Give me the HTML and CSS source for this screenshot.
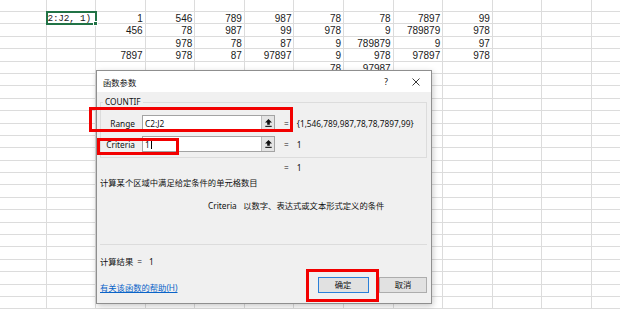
FILE: index.html
```html
<!DOCTYPE html>
<html lang="zh-CN">
<head>
<meta charset="utf-8">
<title>函数参数</title>
<link rel="stylesheet" href="styles.css">
</head>
<body>
<div class="sheet">
  <span></span><span></span><span></span><span></span><span></span><span></span><span></span><span></span><span></span><span></span><span></span><span></span><span></span>
  <span></span><span class="sel"><em class="formula">2:J2, 1)</em></span><span>1</span><span>546</span><span>789</span><span>987</span><span>78</span><span>78</span><span>7897</span><span>99</span><span></span><span></span><span></span>
  <span></span><span></span><span>456</span><span>78</span><span>987</span><span>99</span><span>978</span><span>9</span><span>789879</span><span>978</span><span></span><span></span><span></span>
  <span></span><span></span><span></span><span>978</span><span>78</span><span>87</span><span>9</span><span>789879</span><span>9</span><span>97</span><span></span><span></span><span></span>
  <span></span><span></span><span>7897</span><span>978</span><span>87</span><span>97897</span><span>9</span><span>978</span><span>97897</span><span>978</span><span></span><span></span><span></span>
  <span></span><span></span><span></span><span></span><span></span><span></span><span>78</span><span>97987</span><span></span><span></span><span></span><span></span><span></span>
  <span></span><span></span><span></span><span></span><span></span><span></span><span></span><span></span><span></span><span></span><span></span><span></span><span></span>
  <span></span><span></span><span></span><span></span><span></span><span></span><span></span><span></span><span></span><span></span><span></span><span></span><span></span>
  <span></span><span></span><span></span><span></span><span></span><span></span><span></span><span></span><span></span><span></span><span></span><span></span><span></span>
  <span></span><span></span><span></span><span></span><span></span><span></span><span></span><span></span><span></span><span></span><span></span><span></span><span></span>
  <span></span><span></span><span></span><span></span><span></span><span></span><span></span><span></span><span></span><span></span><span></span><span></span><span></span>
  <span></span><span></span><span></span><span></span><span></span><span></span><span></span><span></span><span></span><span></span><span></span><span></span><span></span>
  <span></span><span></span><span></span><span></span><span></span><span></span><span></span><span></span><span></span><span></span><span></span><span></span><span></span>
  <span></span><span></span><span></span><span></span><span></span><span></span><span></span><span></span><span></span><span></span><span></span><span></span><span></span>
  <span></span><span></span><span></span><span></span><span></span><span></span><span></span><span></span><span></span><span></span><span></span><span></span><span></span>
  <span></span><span></span><span></span><span></span><span></span><span></span><span></span><span></span><span></span><span></span><span></span><span></span><span></span>
  <span></span><span></span><span></span><span></span><span></span><span></span><span></span><span></span><span></span><span></span><span></span><span></span><span></span>
  <span></span><span></span><span></span><span></span><span></span><span></span><span></span><span></span><span></span><span></span><span></span><span></span><span></span>
  <span></span><span></span><span></span><span></span><span></span><span></span><span></span><span></span><span></span><span></span><span></span><span></span><span></span>
  <span></span><span></span><span></span><span></span><span></span><span></span><span></span><span></span><span></span><span></span><span></span><span></span><span></span>
  <span></span><span></span><span></span><span></span><span></span><span></span><span></span><span></span><span></span><span></span><span></span><span></span><span></span>
  <span></span><span></span><span></span><span></span><span></span><span></span><span></span><span></span><span></span><span></span><span></span><span></span><span></span>
  <span></span><span></span><span></span><span></span><span></span><span></span><span></span><span></span><span></span><span></span><span></span><span></span><span></span>
  <span></span><span></span><span></span><span></span><span></span><span></span><span></span><span></span><span></span><span></span><span></span><span></span><span></span>
  <span></span><span></span><span></span><span></span><span></span><span></span><span></span><span></span><span></span><span></span><span></span><span></span><span></span>
  <span></span><span></span><span></span><span></span><span></span><span></span><span></span><span></span><span></span><span></span><span></span><span></span><span></span>
</div>

<div class="dialog">
  <div class="titlebar">
    <span class="title">函数参数</span>
    <span class="tb-btn">?</span>
    <span class="tb-btn"><svg class="x-icon" width="8" height="8" viewBox="0 0 8 8"><path d="M0.5 0.5 L7.5 7.5 M7.5 0.5 L0.5 7.5" stroke="#222" stroke-width="0.9" fill="none"/></svg></span>
  </div>
  <div class="body">
    <fieldset class="group">
      <legend>COUNTIF</legend>
      <div class="arg-row">
        <span class="arg-label">Range</span>
        <div class="ref-input"><span class="ref-text">C2:J2</span><span class="pick"><svg width="7" height="8" viewBox="0 0 7 8"><path d="M3.5 0 L0 3.5 L2.2 3.5 L2.2 5.8 L4.8 5.8 L4.8 3.5 L7 3.5 Z" fill="#111"/><rect x="0.3" y="6.8" width="6.4" height="1.1" fill="#111"/></svg></span></div>
        <span class="eq">=</span>
        <span class="val">{1,546,789,987,78,78,7897,99}</span>
      </div>
      <div class="arg-row">
        <span class="arg-label">Criteria</span>
        <div class="ref-input"><span class="ref-text">1<i class="caret"></i></span><span class="pick"><svg width="7" height="8" viewBox="0 0 7 8"><path d="M3.5 0 L0 3.5 L2.2 3.5 L2.2 5.8 L4.8 5.8 L4.8 3.5 L7 3.5 Z" fill="#111"/><rect x="0.3" y="6.8" width="6.4" height="1.1" fill="#111"/></svg></span></div>
        <span class="eq">=</span>
        <span class="val">1</span>
      </div>
    </fieldset>
    <div class="line eq-line"><span>=</span><span class="val">1</span></div>
    <div class="line desc">计算某个区域中满足给定条件的单元格数目</div>
    <div class="line arg-desc"><span class="arg-name">Criteria</span>以数字、表达式或文本形式定义的条件</div>
    <div class="sep"></div>
    <div class="line result"><span>计算结果</span><span class="res-eq">=</span><span>1</span></div>
    <div class="footer">
      <a class="help-link" href="#">有关该函数的帮助(H)</a>
      <div class="buttons">
        <button class="btn primary">确定</button>
        <button class="btn cancel">取消</button>
      </div>
    </div>
  </div>
</div>

<div class="mark mark-range"></div>
<div class="mark mark-criteria"></div>
<div class="mark mark-ok"></div>
</body>
</html>
```

FILE: styles.css
```css
html, body {
  margin: 0;
  padding: 0;
}
body {
  width: 620px;
  height: 309px;
  overflow: hidden;
  position: relative;
  background: #fff;
  font-family: "Liberation Sans", Arial, sans-serif;
}

/* spreadsheet */
.sheet {
  display: grid;
  grid-template-columns: 46.5px repeat(12, 49.6px);
  grid-template-rows: 12px;
  grid-auto-rows: 12.4px;
}
.sheet > span {
  box-sizing: border-box;
  border-right: 1px solid #dcdcdc;
  border-bottom: 1px solid #dcdcdc;
  font-size: 10px;
  line-height: 12px;
  padding: 1px 2px 0 0;
  text-align: right;
  white-space: nowrap;
  color: #1a1a1a;
  overflow: hidden;
}
.sheet > .sel {
  position: relative;
  z-index: 1;
  outline: 2px solid #217346;
  outline-offset: -1px;
  text-align: left;
  padding: 1px 0 0 0;
  overflow: visible;
}
.sheet > .sel::after {
  content: "";
  position: absolute;
  right: -3px;
  bottom: -3px;
  width: 3px;
  height: 3px;
  background: #217346;
  border: 1px solid #fff;
}
.formula {
  display: block;
  font-style: normal;
  font-family: "Liberation Mono", "DejaVu Sans Mono", monospace;
  font-size: 9.4px;
  letter-spacing: -0.2px;
  padding-left: 1px;
}

/* dialog */
.dialog {
  position: absolute;
  left: 96px;
  top: 70px;
  width: 336px;
  height: 234px;
  box-sizing: border-box;
  border: 1px solid #8f8f8f;
  background: #f0f0f0;
  box-shadow: 1px 2px 6px rgba(0, 0, 0, 0.22);
  display: flex;
  flex-direction: column;
  font-family: "Noto Sans", "Noto Sans CJK SC", sans-serif;
  font-size: 8.3px;
  color: #111;
  z-index: 2;
}
.titlebar {
  height: 21px;
  flex: none;
  background: #fff;
  display: flex;
  align-items: center;
  padding-left: 6px;
}
.title {
  flex: 1;
}
.tb-btn {
  width: 30px;
  text-align: center;
  font-size: 8.5px;
  display: flex;
  justify-content: center;
  align-items: center;
}
.body {
  flex: 1;
  display: flex;
  flex-direction: column;
  padding: 5px 4px 0 3px;
}
.group {
  margin: 0;
  padding: 8px 0 5px 0;
  width: 327px;
  box-sizing: border-box;
  border: 1px solid #dcdcdc;
  min-inline-size: auto;
}
.group legend {
  padding: 0 2px;
  margin-left: 2px;
  line-height: 10px;
  font-size: 8.3px;
}
.arg-row {
  display: flex;
  align-items: center;
  height: 16px;
}
.arg-row + .arg-row {
  margin-top: 5px;
}
.arg-label {
  width: 36px;
  box-sizing: border-box;
  text-align: right;
  padding-right: 2px;
}
.ref-input {
  width: 133px;
  height: 16px;
  margin-left: 5px;
  box-sizing: border-box;
  border: 1px solid #a3a3a3;
  background: #fff;
  display: flex;
  align-items: center;
}
.ref-text {
  flex: 1;
  padding-left: 2px;
  display: flex;
  align-items: center;
}
.caret {
  display: inline-block;
  width: 1px;
  height: 10px;
  background: #000;
  margin-left: 1px;
}
.pick {
  width: 12px;
  height: 14px;
  background: #e4e4e4;
  border-left: 1px solid #bdbdbd;
  display: flex;
  align-items: center;
  justify-content: center;
}
.eq {
  margin-left: 9px;
}
.val {
  margin-left: 8px;
}
.line {
  height: 11px;
  line-height: 11px;
  white-space: nowrap;
}
.eq-line {
  margin-top: 4px;
  padding-left: 184px;
}
.desc {
  margin-top: 4px;
}
.arg-desc {
  margin-top: 11.5px;
  padding-left: 108px;
}
.arg-name {
  margin-right: 6.5px;
}
.sep {
  margin-top: 33.5px;
  width: 327px;
  height: 1px;
  background: #dcdcdc;
}
.result {
  margin-top: 11px;
}
.res-eq {
  margin: 0 7px 0 4px;
}
.footer {
  display: flex;
  align-items: flex-start;
  margin-top: 10px;
}
.help-link {
  margin-top: 5px;
  line-height: 11px;
  color: #0a64c8;
  text-decoration: underline;
}
.buttons {
  margin-left: auto;
  display: flex;
  gap: 10.5px;
}
.btn {
  height: 16px;
  box-sizing: border-box;
  border: 1px solid #adadad;
  background: #e1e1e1;
  font-family: inherit;
  font-size: 8.3px;
  color: #111;
  padding: 0;
  line-height: 14px;
}
.btn.primary {
  width: 51px;
  border-color: #2a7fd8;
}
.btn.cancel {
  width: 48px;
}

/* red annotation boxes */
.mark {
  position: absolute;
  box-sizing: border-box;
  border: 3px solid #f20000;
  z-index: 3;
}
.mark-range {
  left: 89px;
  top: 107px;
  width: 204px;
  height: 25px;
}
.mark-criteria {
  left: 97px;
  top: 138px;
  width: 82px;
  height: 17px;
}
.mark-ok {
  left: 306px;
  top: 269px;
  width: 73px;
  height: 33px;
}
```
